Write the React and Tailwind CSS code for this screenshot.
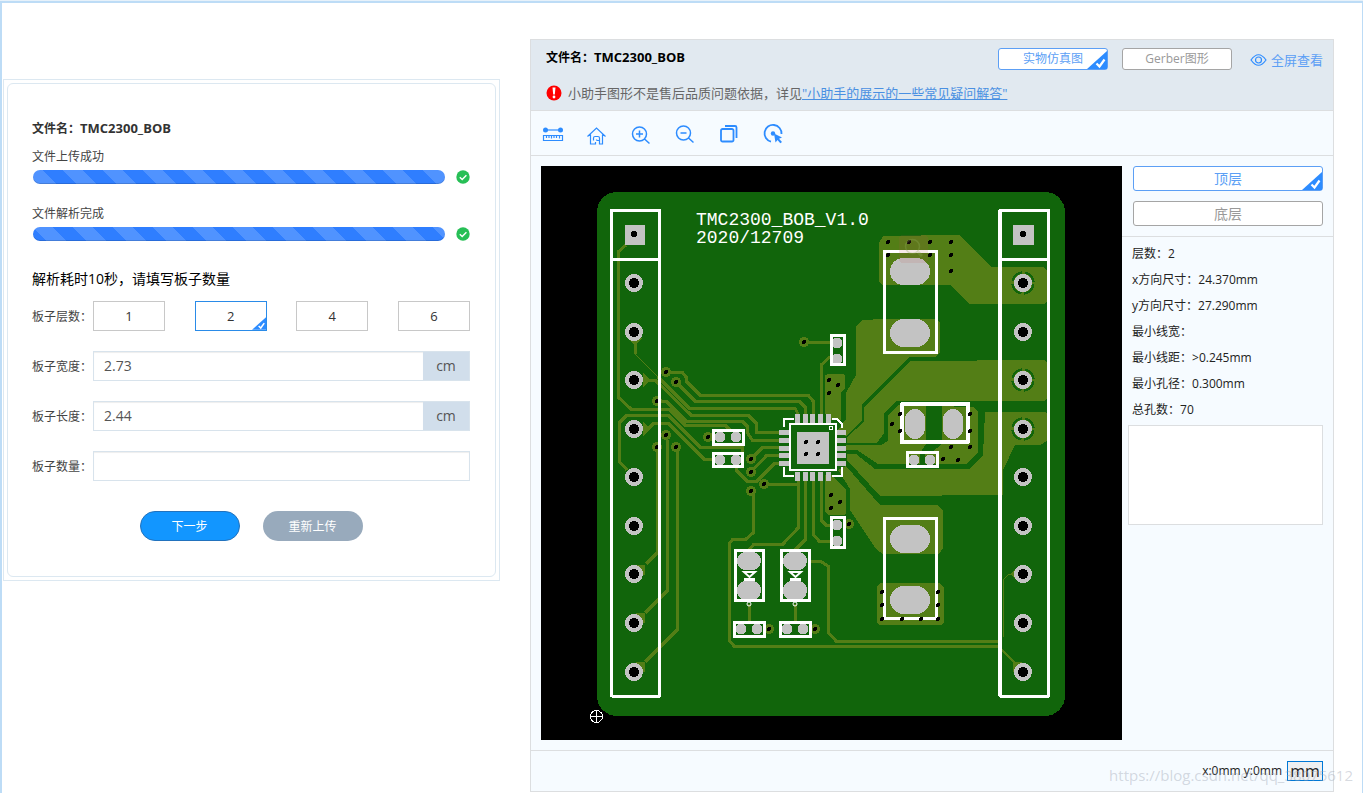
import React, { useState } from 'react';
import clsx from 'clsx';

const COPPER = '#537e16';
const BOARD = '#11650b';
const PAD = '#c3c3c3';

const headerPinRows = [283, 332, 380, 429, 477, 526, 574, 623, 672];

const pours = [
  '883,236 959,235 992,267 1043,267 1047,270 1047,301 1044,304 969,304 951,285 882,285 879,281 879,243',
  '862,320 884,319 936,319 940,323 940,353 935,357 909,357 862,404 862,421 846,436 838,430 846,419 846,393 856,375 856,326',
  '911,361 1044,360 1047,362 1047,398 1044,401 896,401 884,413 884,433 877,443 847,443 847,437 864,422 864,407',
  '898,405 973,407 978,412 978,452 966,464 878,464 857,450 846,450 846,445 881,445 888,441 888,416',
  '985,412 1045,412 1047,414 1047,441 1040,445 1015,445 1003,470 1003,495 880,496 847,460 847,454 856,454 875,469 969,469 983,455',
  '838,470 846,466 880,505 937,505 943,510 943,548 939,554 883,554 876,549 850,510 850,489',
  '825,475 832,475 846,490 846,513 844,515 828,515 825,511',
  '825,375 828,374 843,374 845,376 845,388 841,393 841,420 827,420 825,412',
  '880,583 940,583 944,588 944,622 941,625 879,625 877,622 877,587',
];

const traces = [
  '626,245 618,252 618,397 631,409 669,409 685,425 725,425 730,430',
  '627,470 619,461 619,423 627,415 668,415 700,447 742,447 742,453',
  '643,429 648,429 654,423 668,423 704,459 714,459',
  '657,401 666,401 686,421 742,421 747,426 747,432 752,440 779,440',
  '643,380 655,380 691,415 748,415 756,423 756,432 779,432',
  '658,377 689,408 795,408 798,414',
  '676,382 695,401 799,401 805,407 805,414',
  '666,372 682,372 686,377 686,381 700,395 808,395 813,401 813,414',
  '821,414 821,365 830,357',
  '804,342 831,342',
  '779,447 763,447 751,459',
  '779,455 767,455 751,472',
  '779,463 775,463 757,481 747,481 736,470 736,466',
  '764,484 798,484',
  '798,481 798,528 783,544 754,544 749,550',
  '805,481 805,540 795,550',
  '813,481 813,534 819,541 831,541',
  '821,481 821,520 826,525 831,525',
  '751,491 753,495 753,533 746,539 733,539 729,544 729,640 734,646 1001,646',
  '811,561 820,561 828,566 828,632 836,641 1001,641',
  '657,447 657,553 646,564',
  '666,435 667,440 667,591 645,613',
  '676,447 677,450 677,630 645,662',
  '749,604 749,622',
  '795,604 795,622',
];

const ringedVias = [
  [666, 372], [676, 382], [657, 401], [804, 342], [666, 435], [657, 447], [676, 447], [708, 437],
  [751, 459], [751, 472], [764, 484], [751, 491], [769, 629], [815, 629], [849, 524],
];

const vias = [
  [888, 242], [909, 242], [930, 242], [951, 242], [888, 255], [930, 255], [951, 255], [951, 271],
  [829, 380], [838, 385], [829, 393], [831, 495], [840, 502], [831, 508],
  [892, 424], [900, 414], [900, 431], [970, 414], [970, 431], [970, 447], [951, 447], [943, 459], [958, 460],
  [882, 592], [882, 605], [882, 619], [902, 619], [921, 619], [938, 619], [938, 592], [938, 605],
  [806, 442], [818, 442], [806, 454], [818, 454],
];

// x, y, width, height
const smallParts = [
  [831.5, 335.5, 13, 29],
  [831.5, 517.5, 13, 30],
  [713.5, 430.5, 30, 14],
  [713.5, 453.5, 29, 13],
  [734.5, 622.5, 30, 14],
  [780.5, 622.5, 30, 14],
  [907.5, 452.5, 30, 14],
];

const smallPads = [
  [837, 343], [837, 359], [837, 525], [837, 541], [720, 437], [736, 437], [720, 460], [736, 460],
  [741, 629], [757, 629], [787, 629], [803, 629], [914, 460], [930, 460],
];

const bigPads = [
  [890, 258, 40, 27],
  [890, 319, 40, 28],
  [890, 525, 40, 28],
  [890, 586, 40, 28],
  [905, 409, 20, 30],
  [943, 409, 20, 30],
];

const Board = () => (
  <svg viewBox="541 166 581 574" className="block w-full h-auto bg-black" shapeRendering="crispEdges" role="img" aria-label="TMC2300_BOB">
    <rect x="597" y="192" width="468" height="524" rx="20" fill={BOARD} />

    {/* Copper */}
    <g fill={COPPER}>
      {pours.map((points) => <polygon key={points} points={points} />)}
      <path d="M636 565h9v10h-9zM636 613h9v10h-9zM636 662h9v10h-9zM1013 662h9v10h-9zM643 422l8 7-8 7zM643 373l7 7-7 7zM627 338h15l-7 8zM1017 567v14l-7-7z" />
    </g>
    <path d="M926 406h16v38l-11 9h-6v11h-5v-11l6-9z" fill={BOARD} />
    <g fill="none" stroke={COPPER} strokeWidth="3">
      {traces.map((points) => <polyline key={points} points={points} />)}
      <polyline points="635,341 635,354 658,377" strokeWidth="1" />
      <polyline points="635,341 635,354" />
      <polyline points="1003,637 1003,580 1009,574 1016,574" strokeWidth="1" />
      <polyline points="1001,649 1015,663" strokeWidth="2" />
    </g>
    {ringedVias.map(([x, y]) => (
      <g key={`${x}-${y}`}>
        <circle cx={x} cy={y} r="5" fill={COPPER} />
        <circle cx={x} cy={y} r="2" />
      </g>
    ))}

    {/* Pin headers */}
    <g fill="none" stroke="white" strokeWidth="3">
      <path d="M611.5 210H659.5V696H611.5ZM611.5 259.5H659.5" strokeLinejoin="round" />
      <path d="M1000 210H1048.5V696H1000ZM1000 259.5H1048.5" strokeLinejoin="round" />
      <path d="M1000 210V696" strokeWidth="4" />
    </g>
    {[283, 380, 429].map((y) => (
      <circle key={y} cx="1023" cy={y} r="10.5" fill="none" stroke={BOARD} strokeWidth="2.5" strokeDasharray="13.5 3" strokeDashoffset="-1.5" />
    ))}
    <rect x="625" y="225" width="20" height="20" fill={PAD} />
    <rect x="1013" y="225" width="21" height="20" fill={PAD} />
    <circle cx="634" cy="234" r="3" />
    <circle cx="1023" cy="234" r="3" />
    {[634, 1023].map((x) => headerPinRows.map((y) => (
      <circle key={`${x}-${y}`} cx={x} cy={y} r="7" fill="black" stroke={PAD} strokeWidth="4" />
    )))}

    {/* Pads */}
    <g fill={PAD}>
      {bigPads.map(([x, y, w, h]) => (
        <rect key={`${x}-${y}`} x={x} y={y} width={w} height={h} rx={Math.min(w, h) / 2} />
      ))}
      {smallPads.map(([x, y]) => <rect key={`${x}-${y}`} x={x - 5} y={y - 5} width="10" height="10" rx="4" />)}
      {[737, 783].map((x) => (
        <g key={x}>
          <rect x={x} y="552" width="24" height="18" rx="9" />
          <rect x={x} y="581" width="24" height="19" rx="9" />
        </g>
      ))}
    </g>

    {/* Silkscreen */}
    <g fill="none" stroke="white" strokeWidth="3" strokeLinejoin="round">
      <rect x="884.5" y="251.5" width="52" height="101" />
      <rect x="884.5" y="518.5" width="52" height="100" />
      <rect x="902" y="404" width="66" height="38" strokeWidth="4" />
      {smallParts.map(([x, y, w, h]) => <rect key={`${x}-${y}`} x={x} y={y} width={w} height={h} />)}
      <rect x="735.5" y="550.5" width="28" height="50" />
      <rect x="781.5" y="550.5" width="28" height="50" />
    </g>
    {[749, 795].map((x) => (
      <g key={x} fill="none" stroke="white" shapeRendering="auto">
        <path d={`M${x - 5} 572H${x + 6}L${x + 0.5} 577Z`} strokeWidth="2" />
        <path d={`M${x - 5} 579.5H${x + 6}`} strokeWidth="3" />
        <circle cx={x} cy="604" r="2" />
      </g>
    ))}

    {/* Driver chip */}
    <g fill={PAD}>
      {[795, 803, 810, 818, 826].map((x) => (
        <g key={x}>
          <rect x={x} y="414" width="5" height="10" />
          <rect x={x} y="472" width="5" height="9" />
        </g>
      ))}
      {[430, 438, 446, 453, 461].map((y) => (
        <g key={y}>
          <rect x="779" y={y} width="10" height="5" />
          <rect x="837" y={y} width="9" height="5" />
        </g>
      ))}
    </g>
    <rect x="790" y="424" width="46" height="46" fill={BOARD} stroke="white" strokeWidth="2" />
    <rect x="797" y="432" width="32" height="32" fill={PAD} />
    <g fill="none" stroke="white" strokeWidth="2">
      <path d="M784 427V419H794M832 419H837L842 424V428M784 467V476H794M842 467V476H832" />
      <circle cx="831" cy="428" r="2" strokeWidth="1" />
    </g>
    {vias.map(([x, y]) => <circle key={`${x}-${y}`} cx={x} cy={y} r="2" />)}

    <g fill="white" fontFamily="'Liberation Mono', monospace" fontSize="18">
      <text x="696" y="225">TMC2300_BOB_V1.0</text>
      <text x="696" y="243">2020/12709</text>
    </g>

    {/* Faint magnifier over the top pad */}
    <rect x="899" y="235" width="29" height="28" rx="4" fill="#c0504d" opacity="0.12" />
    <g fill="none" stroke="#8fae5a" opacity="0.3" strokeWidth="1.5" shapeRendering="auto">
      <circle cx="912.5" cy="246.5" r="7" />
      <path d="M918 252l4 4" strokeWidth="3" />
    </g>

    {/* Origin */}
    <g fill="none" stroke="white">
      <circle cx="596.5" cy="716.5" r="6" />
      <path d="M596.5 710V723M590 716.5H603" />
    </g>
  </svg>
);

const Corner = ({ className }) => (
  <svg viewBox="0 0 20 18" className={clsx('absolute right-0 bottom-0', className)} aria-hidden="true">
    <path d="M20 0V18H0Z" fill="#2d8cff" />
    <path d="M9.5 12.5l3 3 5-7" fill="none" stroke="white" strokeWidth="2.2" />
  </svg>
);

const ViewButton = ({ active, className, children, ...props }) => (
  <button
    type="button"
    aria-pressed={active}
    className={clsx(
      'relative rounded-[3px] border bg-white text-center',
      active ? 'border-[#5c9ff5] text-[#5c9ff5]' : 'border-[#a5a5a5] text-[#999]',
      className
    )}
    {...props}
  >
    {children}
    {active && <Corner className="w-5 h-[18px]" />}
  </button>
);

const Progress = ({ label, striped }) => (
  <div>
    <p className="text-xs leading-5 mb-[3px] text-[#444]">{label}</p>
    <div className="flex items-center gap-[11px]">
      <div
        role="progressbar"
        aria-label={label}
        aria-valuenow={100}
        className={clsx(
          'ml-px h-[14px] flex-1 rounded-full bg-[#2f7eff] bg-[linear-gradient(45deg,#5093ff_25%,transparent_25%,transparent_50%,#5093ff_50%,#5093ff_75%,transparent_75%)] bg-[length:40px_40px] shadow-[inset_0_-1px_0_rgba(0,0,0,0.15)]',
          striped
        )}
      />
      <svg viewBox="0 0 14 14" className="w-[14px] h-[14px]" aria-hidden="true">
        <circle cx="7" cy="7" r="6.7" fill="#27bf56" />
        <path d="M3.8 7.2l2.4 2.3 4.2-4.3" fill="none" stroke="white" strokeWidth="1.4" />
      </svg>
    </div>
  </div>
);

const SizeField = ({ id, label, unit, value, onChange }) => (
  <div className="flex items-center">
    <label htmlFor={id} className="w-[61px] shrink-0 whitespace-nowrap pt-[2px] text-xs text-[#444]">{label}</label>
    <div className="flex flex-1 h-[30px] border border-[#d8e3ec]">
      <input
        id={id}
        value={value}
        onChange={(e) => onChange(e.target.value)}
        className="flex-1 min-w-0 px-[10px] pb-px text-sm text-[#555] outline-none shadow-[inset_0_1px_1px_rgba(0,0,0,0.07)]"
      />
      {unit && <span className="w-[46px] text-center text-sm leading-7 bg-[#d1deeb] text-[#555]">{unit}</span>}
    </div>
  </div>
);

const tools = [
  {
    name: '测量',
    icon: (
      <>
        <circle cx="3.5" cy="7" r="2.5" fill="currentColor" stroke="none" />
        <circle cx="18.5" cy="7" r="2.5" fill="currentColor" stroke="none" />
        <path d="M3 7H19" strokeWidth="1.2" />
        <path d="M1.5 12.5H20.5V17.5H1.5Z" strokeWidth="1.2" />
        <path d="M4.5 13v2M7 13v2M9.5 13v2.5M12 13v2M14.5 13v2M17.5 13v2.5" strokeWidth="1.2" />
      </>
    ),
  },
  {
    name: '复位',
    icon: <path d="M1.5 13.5L10.5 5L19.5 13.5M4.5 11.5V21H9.5V19M16.5 11.5V21H13.5V15Q13.5 13.5 12 13.5H9Q7.5 13.5 7.5 15V17.5M13.5 17.5H11.5Q10.5 17.5 10.5 16.5" strokeWidth="1.2" />,
  },
  {
    name: '放大',
    icon: <path d="M16.5 11a7 7 0 1 1-14 0a7 7 0 1 1 14 0ZM14.5 16L19.5 20.5M6 11H13M9.5 7.5V14.5" />,
  },
  {
    name: '缩小',
    icon: <path d="M16.5 10a7 7 0 1 1-14 0a7 7 0 1 1 14 0ZM14.5 15L19.5 19.5M6.5 10H12.5" />,
  },
  {
    name: '图层',
    icon: <path d="M4.5 6H14A1.5 1.5 0 0 1 15.5 7.5V17A1.5 1.5 0 0 1 14 18.5H4.5A1.5 1.5 0 0 1 3 17V7.5A1.5 1.5 0 0 1 4.5 6ZM7 3H17A1.5 1.5 0 0 1 18.5 4.5V15" strokeWidth="1.8" />,
  },
  {
    name: '选择',
    icon: (
      <>
        <path d="M9 18.7A8.5 8.5 0 1 1 19.5 11" strokeWidth="1.8" />
        <circle cx="11" cy="10.5" r="2.2" fill="currentColor" stroke="none" />
        <path d="M12 10.5L20 14.5L17 15.7L20 19L18.3 20.3L15.5 17L13.5 19.5Z" fill="currentColor" stroke="none" />
      </>
    ),
  },
];

const boardInfo = [
  ['层数：', '2'],
  ['x方向尺寸：', '24.370mm'],
  ['y方向尺寸：', '27.290mm'],
  ['最小线宽：', ''],
  ['最小线距：', '>0.245mm'],
  ['最小孔径：', '0.300mm'],
  ['总孔数：', '70'],
];

const App = () => {
  const [layers, setLayers] = useState(2);
  const [width, setWidth] = useState('2.73');
  const [length, setLength] = useState('2.44');
  const [quantity, setQuantity] = useState('');
  const [view, setView] = useState('real');
  const [side, setSide] = useState('top');

  return (
    <div className="relative min-h-screen flex flex-col bg-[#e6f1fa] pt-px font-['Open_Sans','Noto_Sans_CJK_SC',sans-serif]">
      <div className="flex flex-1 items-start bg-white border-t-2 border-l-2 border-r border-[#bddcf6]">
        {/* Order form */}
        <section className="mt-[76px] ml-px w-[497px] shrink-0 border border-[#dce8f1] p-[3px]">
          <div className="rounded-md border border-[#dce8f1] pt-[35px] pb-[35px] pl-6 pr-[25px]">
            <h2 className="h-5 text-xs leading-[18px] font-bold text-[#333] mb-2">
              文件名：<span className="text-[13px]">TMC2300_BOB</span>
            </h2>
            <div className="space-y-5">
              <Progress label="文件上传成功" striped="bg-[position:30px_0]" />
              <Progress label="文件解析完成" striped="bg-[position:0_0]" />
            </div>
            <p className="mt-7 mb-3 text-sm leading-5 text-black">解析耗时10秒，请填写板子数量</p>

            <div className="space-y-5">
              <div className="flex items-center">
                <span className="w-[61px] shrink-0 whitespace-nowrap pt-[2px] text-xs text-[#444]">板子层数：</span>
                <div className="flex flex-1 justify-between">
                  {[1, 2, 4, 6].map((n) => (
                    <button
                      key={n}
                      type="button"
                      aria-pressed={layers === n}
                      onClick={() => setLayers(n)}
                      className={clsx(
                        'relative w-[72px] h-[30px] border bg-white text-[13px] leading-7 text-[#333]',
                        layers === n ? 'border-[#2a8be8]' : 'border-[#c8c8c8]'
                      )}
                    >
                      {n}
                      {layers === n && <Corner className="w-[14px] h-[13px]" />}
                    </button>
                  ))}
                </div>
              </div>
              <SizeField id="board-width" label="板子宽度：" unit="cm" value={width} onChange={setWidth} />
              <SizeField id="board-length" label="板子长度：" unit="cm" value={length} onChange={setLength} />
              <SizeField id="board-quantity" label="板子数量：" value={quantity} onChange={setQuantity} />
            </div>

            <div className="mt-[30px] flex justify-center gap-[23px] text-xs text-white">
              <button type="button" className="w-[100px] h-[30px] pt-px rounded-full border border-[#2272bd] bg-[#1296ff]">下一步</button>
              <button type="button" className="w-[100px] h-[30px] pt-px rounded-full bg-[#98aabc]">重新上传</button>
            </div>
          </div>
        </section>

        {/* Board viewer */}
        <section className="mt-9 ml-[30px] mr-7 flex-1 min-w-0 border border-[#dcdee0] bg-[#f6fbff]">
          <header className="bg-[#e1e9f0] border-b border-[#dcdee0] pt-2 pb-[5px] pl-[15px] pr-[10px]">
            <div className="flex items-start">
              <h2 className="flex-1 text-xs leading-[18px] font-bold text-black">
                文件名：<span className="text-[13px]">TMC2300_BOB</span>
              </h2>
              <ViewButton active={view === 'real'} onClick={() => setView('real')} className="w-[110px] h-[22px] text-xs">
                实物仿真图
              </ViewButton>
              <ViewButton active={view === 'gerber'} onClick={() => setView('gerber')} className="ml-[14px] w-[110px] h-[22px] text-xs">
                Gerber图形
              </ViewButton>
              <a href="#fullscreen" className="ml-[18px] flex items-center gap-1 text-[13px] leading-6 text-[#5c9ff5]">
                <svg viewBox="0 0 17 14" className="w-[17px] h-[14px]" fill="none" stroke="#2d8cff" strokeWidth="1.2" aria-hidden="true">
                  <path d="M1 7Q8.5-3.5 16 7Q8.5 17.5 1 7Z" />
                  <circle cx="8.5" cy="7" r="3" />
                </svg>
                全屏查看
              </a>
            </div>
            <div className="mt-[9px] flex items-center gap-[6px] text-[13px] leading-6 text-[#666]">
              <svg viewBox="0 0 16 16" className="w-4 h-4" aria-hidden="true">
                <circle cx="8" cy="8" r="7.5" fill="#f00" />
                <path d="M6.5 2.5H9.5L8.8 9.5H7.2Z" fill="white" />
                <circle cx="8" cy="12" r="1.4" fill="white" />
              </svg>
              <p>
                小助手图形不是售后品质问题依据，详见
                <a href="#faq" className="text-[#4a90e2] underline">"小助手的展示的一些常见疑问解答"</a>
              </p>
            </div>
          </header>

          <div className="flex gap-[22px] px-[11px] pt-3 pb-[10px] border-b border-[#dcdee0] text-[#2d8cff]">
            {tools.map((tool) => (
              <button key={tool.name} type="button" aria-label={tool.name}>
                <svg viewBox="0 0 22 22" className="w-[22px] h-[22px]" fill="none" stroke="currentColor" strokeWidth="1.5">
                  {tool.icon}
                </svg>
              </button>
            ))}
          </div>

          <div className="flex py-[10px] pl-[10px]">
            <div className="flex-1 min-w-0">
              <Board />
            </div>
            <aside className="w-[211px] shrink-0">
              <div className="flex flex-col gap-[10px] pl-[11px] pr-[10px] pb-[10px] border-b border-[#dcdee0]">
                <ViewButton active={side === 'top'} onClick={() => setSide('top')} className="h-[25px] text-sm">顶层</ViewButton>
                <ViewButton active={side === 'bottom'} onClick={() => setSide('bottom')} className="h-[25px] text-sm">底层</ViewButton>
              </div>
              <dl className="pt-1 pl-[10px] text-xs leading-[26px] text-[#222]">
                {boardInfo.map(([label, value]) => (
                  <div key={label} className="flex h-[26px]">
                    <dt>{label}</dt>
                    <dd>{value}</dd>
                  </div>
                ))}
              </dl>
              <div className="pl-[6px] pr-[10px] pt-[2px]">
                <textarea aria-label="备注" className="block w-full h-[100px] resize-none border border-[#dcdee0] bg-white text-xs outline-none" />
              </div>
            </aside>
          </div>

          <footer className="flex h-[41px] items-center justify-end gap-[5px] border-t border-[#dcdee0] pr-[10px] text-xs text-[#222]">
            <span>x:0mm y:0mm</span>
            <button type="button" className="w-9 h-5 border border-[#0078d7] bg-[#eef0f2] text-base leading-4">mm</button>
          </footer>
        </section>
      </div>

      <p className="pointer-events-none absolute right-[10px] bottom-2 text-[15px] leading-5 text-gray-400/40">
        https://blog.csdn.net/qq_38075612
      </p>
    </div>
  );
};

export default App;
